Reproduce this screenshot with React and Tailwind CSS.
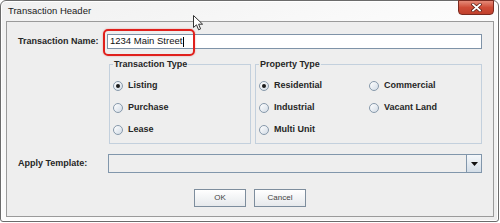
import React from "react";

function Radio({ checked, label }) {
  return (
    <div className="flex items-center h-[22px]">
      <span className="flex items-center justify-center w-[10px] h-[10px] rounded-full border border-[#8799ab] bg-gradient-to-br from-white to-[#d3dce6] shrink-0">
        {checked && <span className="w-[4px] h-[4px] rounded-full bg-[#1b1b1b]" />}
      </span>
      <span className="ml-[5px] font-bold text-[#262626]">{label}</span>
    </div>
  );
}

function Group({ title, width, children }) {
  return (
    <fieldset className={`border border-[#c3d0dd] pl-[3px] pr-[3px] pt-[6px] pb-[0px] ${width}`}>
      <legend className="px-[1px] font-bold text-[#262626] leading-[10px]">{title}</legend>
      {children}
    </fieldset>
  );
}

export default function App() {
  return (
    <div
      className="w-[500px] h-[223px] bg-white relative overflow-hidden text-[9px]"
      style={{ fontFamily: '"Liberation Sans", Arial, sans-serif' }}
    >
      <div className="w-[499px] h-[222px] rounded-t-[6px] rounded-b-[3px] border border-[#6b6b6b] bg-gradient-to-br from-[#f0f0f0] via-[#fcfcfc] to-[#ececec] flex flex-col pl-[5px] pr-[4px] pb-[4px] shadow-[inset_0_0_0_1px_#ffffff]">
        {/* title bar */}
        <div className="h-[20px] flex items-center justify-between relative">
          <span className="text-[9.5px] text-[#1a1a1a] ml-[2px] mt-[1px]">Transaction Header</span>
          <div className="self-start -mt-[1px] w-[36px] h-[15px] rounded-b-[4px] border border-[#7a2a20] bg-gradient-to-b from-[#e58a78] via-[#cf4c37] to-[#c0402c] flex items-center justify-center">
            <svg width="11" height="9" viewBox="0 0 11 9">
              <path d="M2 1.5 L9 7.5 M9 1.5 L2 7.5" stroke="#5a1d14" strokeWidth="3.2" strokeLinecap="square" />
              <path d="M2 1.5 L9 7.5 M9 1.5 L2 7.5" stroke="#ffffff" strokeWidth="1.8" strokeLinecap="square" />
            </svg>
          </div>
        </div>

        {/* content panel */}
        <div className="flex-1 border border-[#9a9a9a] bg-[#eeeeee] pl-[11px] pr-[11px] pt-[12px] flex flex-col">
          {/* Row 1 */}
          <div className="flex items-center h-[15px]">
            <span className="w-[89px] font-bold text-[#262626]">Transaction Name:</span>
            <div className="relative flex-1 h-[15px] border border-[#7f93a8] bg-white flex items-center pl-[2px] text-[#111] text-[9.5px]">
              <span>1234 Main Street</span>
              <span className="w-[1px] h-[10px] bg-black ml-[1px]" />
              <div className="absolute left-[-5px] top-[-6px] w-[92px] h-[27px] rounded-[5px] border-2 border-[#e0201c] shadow-[0_0_2px_rgba(200,0,0,0.35)]" />
            </div>
          </div>

          {/* Groups */}
          <div className="flex mt-[10px] ml-[91px] gap-[4px] h-[85px]">
            <Group title="Transaction Type" width="w-[142px]">
              <Radio checked label="Listing" />
              <Radio label="Purchase" />
              <Radio label="Lease" />
            </Group>
            <Group title="Property Type" width="w-[227px]">
              <div className="grid grid-cols-[110px_1fr]">
                <Radio checked label="Residential" />
                <Radio label="Commercial" />
                <Radio label="Industrial" />
                <Radio label="Vacant Land" />
                <Radio label="Multi Unit" />
              </div>
            </Group>
          </div>

          {/* Apply template */}
          <div className="flex items-center mt-[10px] h-[19px]">
            <span className="w-[90px] font-bold text-[#262626]">Apply Template:</span>
            <div className="flex-1 h-[19px] border border-[#8196ab] bg-[#eeeeee] flex justify-end">
              <div className="w-[15px] h-full border-l border-[#8196ab] bg-gradient-to-b from-[#f5f8fb] to-[#d3dde7] flex items-center justify-center">
                <svg width="7" height="4" viewBox="0 0 7 4">
                  <path d="M0 0 H7 L3.5 4 Z" fill="#111" />
                </svg>
              </div>
            </div>
          </div>

          {/* buttons */}
          <div className="flex justify-center gap-[8px] mt-[16px]">
            <button className="w-[52px] h-[18px] border border-[#7d8d9d] bg-gradient-to-b from-white to-[#e6e9ec] text-[8px] text-[#444]">OK</button>
            <button className="w-[52px] h-[18px] border border-[#7d8d9d] bg-gradient-to-b from-white to-[#e6e9ec] text-[8px] text-[#444]">Cancel</button>
          </div>
        </div>
      </div>

      {/* mouse cursor */}
      <svg className="absolute left-[193px] top-[15px]" width="11" height="16" viewBox="0 0 11 16">
        <path d="M0.5 0.5 L0.5 12.5 L3.5 9.8 L5.6 14.8 L7.6 13.9 L5.6 9.2 L9.6 9.2 Z" fill="#fff" stroke="#333" strokeWidth="1" strokeLinejoin="round" />
      </svg>
    </div>
  );
}
